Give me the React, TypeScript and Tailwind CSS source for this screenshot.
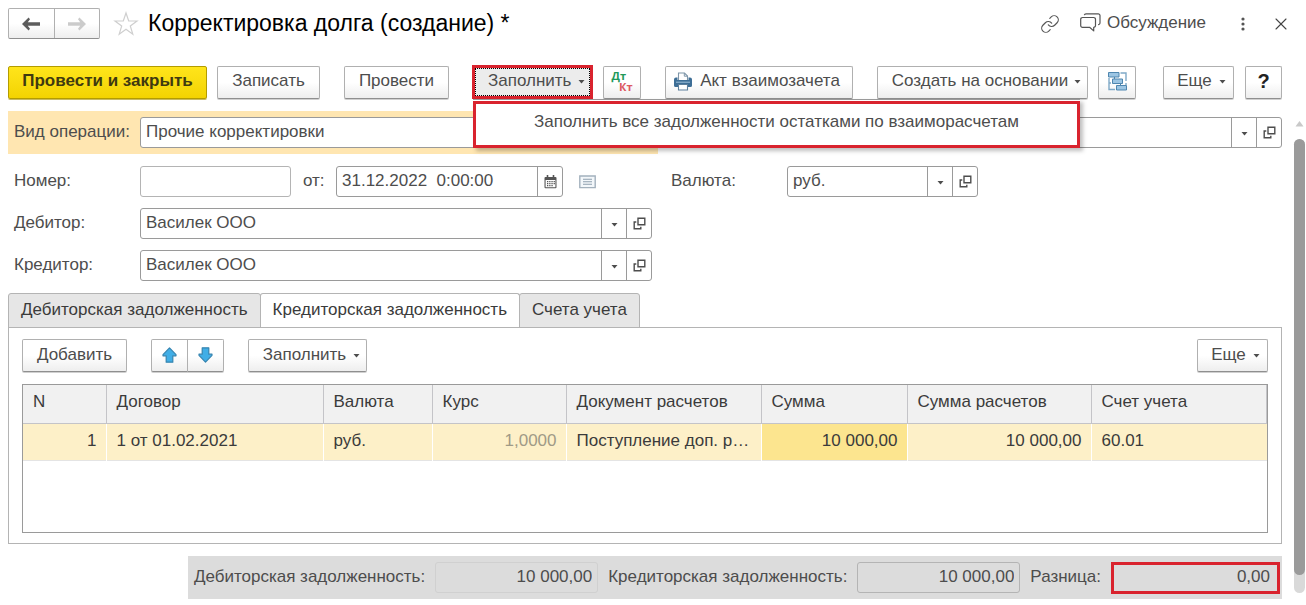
import { ReactNode, useState } from 'react';
import { Link, X } from 'lucide-react';
import { clsx } from 'clsx';

const tabs = ['Дебиторская задолженность', 'Кредиторская задолженность', 'Счета учета'];

const columns = [
  { title: 'N', width: 'w-[83px]' },
  { title: 'Договор', width: 'w-[217px]' },
  { title: 'Валюта', width: 'w-[109px]' },
  { title: 'Курс', width: 'w-[134px]' },
  { title: 'Документ расчетов', width: 'w-[195px]' },
  { title: 'Сумма', width: 'w-[146px]' },
  { title: 'Сумма расчетов', width: 'w-[184px]' },
  { title: 'Счет учета', width: 'w-auto' },
];

const rows = [
  {
    n: 1,
    contract: '1 от 01.02.2021',
    currency: 'руб.',
    rate: '1,0000',
    document: 'Поступление доп. р…',
    amount: '10 000,00',
    settlement: '10 000,00',
    account: '60.01',
  },
];

function Caret() {
  return (
    <svg width="7" height="4" viewBox="0 0 7 4" fill="currentColor" aria-hidden="true" className="mt-0.5">
      <path d="M0.5 0h6L3.5 3.6z" />
    </svg>
  );
}

function OpenIcon() {
  return (
    <svg width="13" height="13" viewBox="0 0 13 13" fill="none" stroke="#4d4d4d" strokeWidth="1.4" aria-hidden="true">
      <path d="M5 1.2h6.8v6.6H5z" />
      <path d="M3.3 5H1.2v6.800h6.600V9.800" />
    </svg>
  );
}

function CalendarIcon() {
  return (
    <svg width="13" height="14" viewBox="0 0 13 14" aria-hidden="true">
      <path d="M1.5 2h10a1 1 0 0 1 1 1v9.3a1 1 0 0 1-1 1h-10a1 1 0 0 1-1-1V3a1 1 0 0 1 1-1z" fill="#555" />
      <path d="M3.5 0v3M9.5 0v3" stroke="#555" strokeWidth="1.6" />
      <path d="M1.6 5h9.8v7.2H1.6z" fill="#fff" />
      <path d="M3 6.7h8M3 8.7h8M3 10.7h6" stroke="#555" strokeWidth="1.2" strokeDasharray="1.3 0.9" />
    </svg>
  );
}

function ListIcon() {
  return (
    <svg width="17" height="14" viewBox="0 0 17 14" aria-hidden="true">
      <path d="M0.8 1h15.4v11.6H0.8z" fill="#f3f7fa" stroke="#a3b1bd" strokeWidth="1.4" />
      <path d="M4 4.3h9M4 6.8h9M4 9.3h9" stroke="#8fa0ae" strokeWidth="1.1" />
    </svg>
  );
}

function NavArrow({ color, flip }: { color: string; flip?: boolean }) {
  return (
    <svg width="18" height="14" viewBox="0 0 18 14" className={flip ? 'rotate-180' : ''} aria-hidden="true">
      <path d="M6.6 0.6L0 7l6.600 6.400 1.400-1.600-2.200-3H18V5.200H5.800l2.200-3z" fill={color} />
    </svg>
  );
}

function MoveArrow({ down }: { down?: boolean }) {
  return (
    <svg width="15" height="16" viewBox="0 0 15 16" className={down ? 'rotate-180' : ''} aria-hidden="true">
      <path d="M7.5 0.9L14 7.7v1.1h-3.2v6.4H4.2V8.8H1V7.7z" fill="#41aee6" stroke="#3584b0" strokeWidth="1.2" strokeLinejoin="round" />
    </svg>
  );
}

function StarIcon() {
  return (
    <svg width="26" height="26" viewBox="0 0 26 26" fill="#fff" stroke="#cfcfcf" strokeWidth="1.2" aria-hidden="true">
      <path d="M13 2l2.700 8h8.300l-6.700 5 2.500 8.200-6.800-5-6.800 5L8.700 15 2 10h8.300z" />
    </svg>
  );
}

function ChatIcon() {
  return (
    <svg width="21" height="19" viewBox="0 0 21 19" fill="none" stroke="#555" strokeWidth="1.2" strokeLinejoin="round" aria-hidden="true">
      <path d="M2.5 4.5h11.2a1.8 1.8 0 0 1 1.8 1.8v6.2a1.8 1.8 0 0 1-1.8 1.8v3.6L9.6 14.3H2.5a1.8 1.8 0 0 1-1.8-1.8V6.3a1.8 1.8 0 0 1 1.8-1.8z" />
      <path d="M4.3 2.2A1.8 1.8 0 0 1 6 0.8h12.2A1.8 1.8 0 0 1 20 2.6v7.2a1.8 1.8 0 0 1-1.9 1.8" />
    </svg>
  );
}

function PrinterIcon() {
  return (
    <svg width="18" height="19" viewBox="0 0 18 19" aria-hidden="true">
      <path d="M4.500 8V1h6l3 3v4" fill="#fff" stroke="#7d95a8" strokeWidth="1.1" />
      <path d="M10.300 1v3.200h3.200" fill="none" stroke="#7d95a8" strokeWidth="1" />
      <path d="M2 5.500h1.500V8h11V5.500H16a2 2 0 0 1 2 2v6a1.500 1.500 0 0 1-1.500 1.500h-15A1.500 1.500 0 0 1 0 13.500v-6a2 2 0 0 1 2-2z" fill="#3d6e96" />
      <path d="M2 10.200h14" stroke="#9fc0da" strokeWidth="1" />
      <path d="M4.500 12.500h9V18h-9z" fill="#fff" stroke="#5d7f9b" strokeWidth="1.1" />
    </svg>
  );
}

function StructureIcon() {
  return (
    <svg width="19" height="19" viewBox="0 0 19 19" fill="#9cc5e3" stroke="#4f86af" strokeWidth="1" aria-hidden="true">
      <path d="M12.500 1H18v8M18 11v2M1 6v11.500h6M1 11h2" fill="none" stroke="#7fa9c7" strokeWidth="1.400" />
      <path d="M6.500 5v4M12.500 11v4" fill="none" />
      <path d="M0.500 0.500h10.500v4.500H0.500zM4.500 7h10v4.500h-10zM8.500 13.500h10V18h-10z" />
    </svg>
  );
}

function Button({ children, className, label }: { children: ReactNode; className?: string; label?: string }) {
  return (
    <button
      type="button"
      aria-label={label}
      className={clsx(
        'flex h-[33px] shrink-0 items-center justify-center whitespace-nowrap rounded-[2px] border border-[#b0b0b0] border-b-[#8f8f8f] bg-gradient-to-b from-white from-50% to-[#eeeeee] pb-0.5 shadow-[0_1px_0_#d0d0d0]',
        className,
      )}
    >
      {children}
    </button>
  );
}

interface FieldProps {
  id: string;
  value: string;
  className?: string;
  variant?: 'combo' | 'date';
}

// Text box with the choice buttons attached on the right
function Field({ id, value, className, variant = 'combo' }: FieldProps) {
  const cell = 'flex w-[25px] shrink-0 items-center justify-center border-l border-[#9a9a9a]';

  return (
    <div className={clsx('flex h-[31px] overflow-hidden rounded-[3px] border border-[#9a9a9a] bg-white', className)}>
      <input id={id} defaultValue={value} className="min-w-0 flex-1 px-[5px] pb-0.5 outline-none" />
      {variant === 'combo' ? (
        <>
          <button type="button" aria-label="Выбрать из списка" className={cell}>
            <Caret />
          </button>
          <button type="button" aria-label="Открыть" className={cell}>
            <OpenIcon />
          </button>
        </>
      ) : (
        <button type="button" aria-label="Календарь" className={cell}>
          <CalendarIcon />
        </button>
      )}
    </div>
  );
}

function Header() {
  return (
    <header className="flex h-[31px] items-center pr-[15px]">
      <div className="flex h-full w-[92px] rounded-[2px] border border-[#b0b0b0] border-b-[#8f8f8f] bg-gradient-to-b from-white from-50% to-[#eeeeee]">
        <button type="button" aria-label="Назад" className="flex flex-1 items-center justify-center border-r border-[#b0b0b0]">
          <NavArrow color="#5c5c5c" />
        </button>
        <button type="button" aria-label="Вперед" className="flex flex-1 items-center justify-center">
          <NavArrow color="#cbcbcb" flip />
        </button>
      </div>
      <button type="button" aria-label="В избранное" className="ml-[13px]">
        <StarIcon />
      </button>
      <h1 className="ml-[9px] pb-0.5 text-[23px] text-black">Корректировка долга (создание) *</h1>

      <div className="ml-auto flex items-center">
        <button type="button" aria-label="Получить ссылку">
          <Link size={20} strokeWidth={1.4} color="#555" />
        </button>
        <button type="button" className="ml-5 flex items-center gap-1.5 pb-0.5">
          <ChatIcon />
          Обсуждение
        </button>
        <button type="button" aria-label="Дополнительно" className="ml-[35px]">
          <svg width="4" height="14" viewBox="0 0 4 14" fill="#555" aria-hidden="true">
            <circle cx="2" cy="2" r="1.6" />
            <circle cx="2" cy="7" r="1.6" />
            <circle cx="2" cy="12" r="1.6" />
          </svg>
        </button>
        <button type="button" aria-label="Закрыть" className="ml-[26px]">
          <X size={20} strokeWidth={1.3} color="#444" />
        </button>
      </div>
    </header>
  );
}

function Toolbar() {
  return (
    <div className="mt-[26px] flex items-center pr-6">
      <button
        type="button"
        className="h-[33px] w-[199px] shrink-0 rounded-[2px] border border-[#b39c00] bg-gradient-to-b from-[#ffe51a] to-[#f3d300] pb-0.5 font-bold text-[#3f3a10] shadow-[0_1px_0_#c9bb60]"
      >
        Провести и закрыть
      </button>
      <Button className="ml-[10px] w-[103px]">Записать</Button>
      <Button className="ml-6 w-[105px]">Провести</Button>

      <div className="relative ml-[23px]">
        <button
          type="button"
          aria-haspopup="menu"
          aria-expanded="true"
          className="flex h-[34px] w-[121px] items-center border-[3px] border-[#d9232e] bg-[#ececec]"
        >
          <span className="flex h-full w-full items-center gap-[7px] border border-dotted border-black pb-0.5 pl-3">
            Заполнить
            <Caret />
          </span>
        </button>
        <div
          role="menu"
          className="absolute left-px top-full z-10 w-[607px] border-t border-[#9a9a9a] pt-px shadow-[3px_3px_4px_rgba(0,0,0,0.25)]"
        >
          <button
            type="button"
            role="menuitem"
            className="block h-[47px] w-full border-[3px] border-[#d9232e] bg-white pb-1.5"
          >
            Заполнить все задолженности остатками по взаиморасчетам
          </button>
        </div>
      </div>

      <Button className="ml-[10px] w-[38px]" label="Показать проводки">
        <span className="flex w-[21px] flex-col font-['Open_Sans',sans-serif] text-[11px] font-bold leading-[11px]">
          <span className="self-start text-[#22995a]">Дт</span>
          <span className="self-end text-[#dd5a62]">Кт</span>
        </span>
      </Button>
      <Button className="ml-6 w-[188px] gap-2 pr-1">
        <PrinterIcon />
        Акт взаимозачета
      </Button>
      <Button className="ml-6 w-[211px] gap-[6px] pl-2">
        Создать на основании
        <Caret />
      </Button>
      <Button className="ml-[10px] w-[38px]" label="Структура подчиненности">
        <StructureIcon />
      </Button>
      <Button className="ml-auto w-[71px] gap-[7px] pl-1.5">
        Еще
        <Caret />
      </Button>
      <Button className="ml-[11px] w-[37px]" label="Справка">
        <span className="text-xl font-bold leading-5 text-[#222]">?</span>
      </Button>
    </div>
  );
}

function Lines() {
  return (
    <div className="min-h-[149px] flex-1 overflow-hidden border border-[#9a9a9a]">
      <table className="w-full table-fixed border-collapse text-left">
        <thead>
          <tr className="h-[38px] border-b border-[#c4c4c8] bg-[#f1f1f1]">
            {columns.map(c => (
              <th
                key={c.title}
                className={clsx('border-r border-[#c4c4c8] pb-1 pl-[10px] font-normal text-[#3b3b3b]', c.width)}
              >
                {c.title}
              </th>
            ))}
          </tr>
        </thead>
        <tbody>
          {rows.map(row => (
            <tr key={row.n} className="h-[37px] border-b border-[#e4e4e4] bg-[#fdf0c8] text-[#3b3b3b]">
              <td className="border-r border-white pb-0.5 pr-[9px] text-right">{row.n}</td>
              <td className="border-r border-white pb-0.5 pl-[10px]">{row.contract}</td>
              <td className="border-r border-white pb-0.5 pl-[10px]">{row.currency}</td>
              <td className="border-r border-white pb-0.5 pr-[9px] text-right text-[#a09a86]">{row.rate}</td>
              <td className="truncate border-r border-white pb-0.5 pl-[10px]">{row.document}</td>
              <td className="border-r border-white bg-[#fce58f] pb-0.5 pr-[9px] text-right">{row.amount}</td>
              <td className="border-r border-white pb-0.5 pr-[9px] text-right">{row.settlement}</td>
              <td className="pb-0.5 pl-[10px]">{row.account}</td>
            </tr>
          ))}
        </tbody>
      </table>
    </div>
  );
}

function Totals() {
  const box = 'h-[31px] w-[163px] rounded-[3px] border bg-transparent px-[5px] pb-0.5 text-right outline-none';

  return (
    <footer className="ml-auto mt-3 flex h-[43px] items-center gap-[10px] bg-[#dcdcdc] pl-1.5 pr-0.5">
      <label htmlFor="debit-total" className="pb-0.5">Дебиторская задолженность:</label>
      <input id="debit-total" readOnly value="10 000,00" className={clsx(box, 'border-[#d0d0d0]')} />
      <label htmlFor="credit-total" className="pb-0.5">Кредиторская задолженность:</label>
      <input id="credit-total" readOnly value="10 000,00" className={clsx(box, 'border-[#b4b4b4]')} />
      <label htmlFor="difference" className="pb-0.5">Разница:</label>
      <input
        id="difference"
        readOnly
        value="0,00"
        className="h-8 w-[169px] border-[3px] border-[#d9232e] bg-transparent px-[7px] pb-0.5 text-right outline-none"
      />
    </footer>
  );
}

export default function App() {
  const [activeTab, setActiveTab] = useState(1);

  return (
    <main className="flex min-h-screen flex-col bg-white pb-1.5 pl-2 pt-2 font-['Liberation_Sans',Arial,sans-serif] text-[17px] leading-5 text-[#4d4d4d]">
      <Header />
      <Toolbar />

      <div className="mt-3 flex flex-1">
        <div className="flex min-w-0 flex-1 flex-col">
          {/* Document fields */}
          <div className="flex items-center bg-[linear-gradient(#ffe6b1,#ffe6b1)] bg-[length:650px_100%] bg-no-repeat py-1.5 pl-1.5">
            <label htmlFor="operation" className="w-[126px] shrink-0 pb-0.5">Вид операции:</label>
            <Field id="operation" value="Прочие корректировки" className="flex-1" />
          </div>

          <div className="mt-3 flex flex-col gap-[11px] pl-1.5">
            <div className="flex items-center">
              <label htmlFor="number" className="w-[126px] shrink-0 pb-0.5">Номер:</label>
              <input id="number" className="h-[31px] w-[151px] rounded-[3px] border border-[#b4b4b4] px-[5px] outline-none" />
              <label htmlFor="date" className="ml-3 w-[33px] pb-0.5">от:</label>
              <Field id="date" value="31.12.2022  0:00:00" variant="date" className="w-[227px]" />
              <button type="button" aria-label="Показать список" className="ml-4">
                <ListIcon />
              </button>
              <label htmlFor="currency" className="ml-[75px] w-[116px] pb-0.5">Валюта:</label>
              <Field id="currency" value="руб." className="w-[191px]" />
            </div>
            <div className="flex items-center">
              <label htmlFor="debtor" className="w-[126px] shrink-0 pb-0.5">Дебитор:</label>
              <Field id="debtor" value="Василек ООО" className="w-[512px]" />
            </div>
            <div className="flex items-center">
              <label htmlFor="creditor" className="w-[126px] shrink-0 pb-0.5">Кредитор:</label>
              <Field id="creditor" value="Василек ООО" className="w-[512px]" />
            </div>
          </div>

          {/* Tabs */}
          <div role="tablist" className="mt-3 flex">
            {tabs.map((tab, idx) => (
              <button
                key={tab}
                type="button"
                role="tab"
                aria-selected={idx === activeTab}
                onClick={() => setActiveTab(idx)}
                className={clsx(
                  '-mb-px h-[35px] whitespace-nowrap rounded-t-[3px] border border-[#b4b4b4] px-3 pb-0.5 text-[#3b3b3b] not-first:-ml-px',
                  idx === activeTab ? 'border-b-white bg-white' : 'bg-[#e6e6e6]',
                )}
              >
                {tab}
              </button>
            ))}
          </div>
          <section className="flex flex-1 flex-col border border-[#b4b4b4] px-[13px] pb-[10px] pt-[11px]">
            <div className="mb-3 flex">
              <Button className="w-[105px]">Добавить</Button>
              <Button className="ml-6 w-[37px] rounded-r-none" label="Переместить вверх">
                <MoveArrow />
              </Button>
              <Button className="-ml-px w-[37px] rounded-l-none" label="Переместить вниз">
                <MoveArrow down />
              </Button>
              <Button className="ml-6 w-[119px] gap-[7px] pl-2">
                Заполнить
                <Caret />
              </Button>
              <Button className="ml-auto w-[71px] gap-[7px] pl-1.5">
                Еще
                <Caret />
              </Button>
            </div>
            <Lines />
          </section>

          <Totals />
        </div>

        {/* Page scrollbar */}
        <div className="flex w-6 flex-col items-end pb-1.5 pr-px pt-[10px]" aria-hidden="true">
          <svg width="11" height="6" viewBox="0 0 11 6" fill="#c9c9c9">
            <path d="M5.500 0L9.500 5.500h-8z" />
          </svg>
          <div className="mt-3 w-[11px] flex-1 rounded-full bg-[#d9d9d9]">
            <div className="h-[96%] rounded-full bg-[#9a9a9a]" />
          </div>
        </div>
      </div>
    </main>
  );
}
